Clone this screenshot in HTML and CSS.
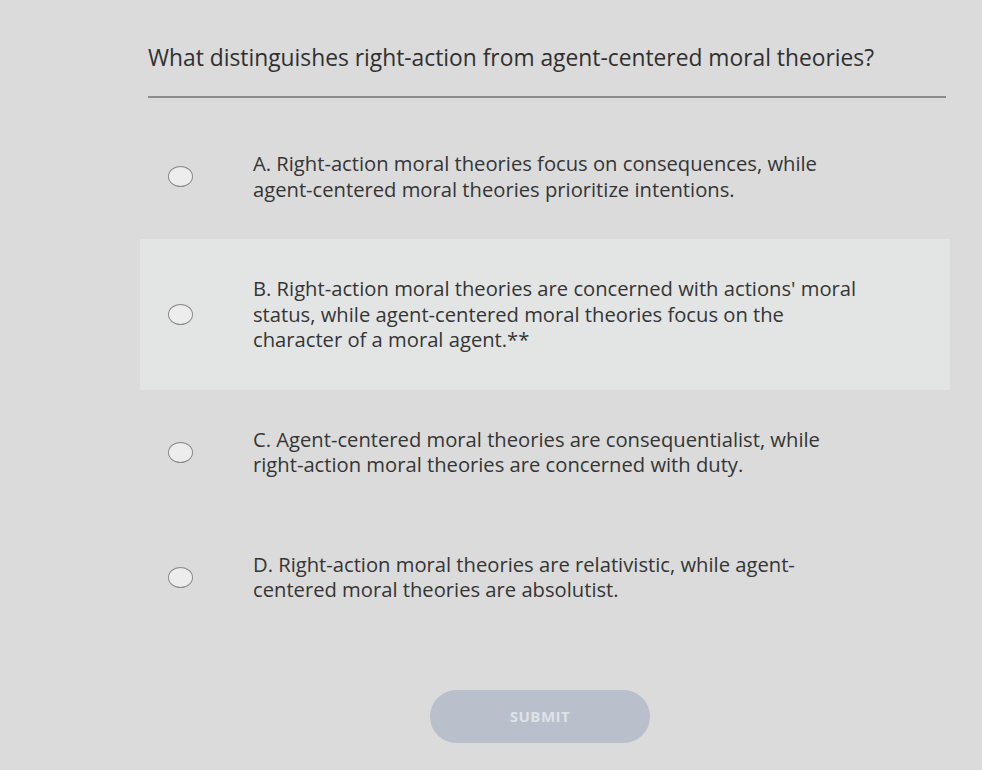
FILE: index.html
```html
<!DOCTYPE html>
<html>
<head>
<meta charset="utf-8">
<link rel="stylesheet" href="styles.css">
</head>
<body>
<div class="page">
  <h1 class="question">What distinguishes right-action from agent-centered moral theories?</h1>
  <div class="rule"></div>
  <div class="options">
    <div class="option">
      <span class="radio"></span>
      <p class="label">A. Right-action moral theories focus on consequences, while<br>agent-centered moral theories prioritize intentions.</p>
    </div>
    <div class="option option-hover">
      <span class="radio"></span>
      <p class="label">B. Right-action moral theories are concerned with actions' moral<br>status, while agent-centered moral theories focus on the<br>character of a moral agent.**</p>
    </div>
    <div class="option">
      <span class="radio"></span>
      <p class="label">C. Agent-centered moral theories are consequentialist, while<br>right-action moral theories are concerned with duty.</p>
    </div>
    <div class="option">
      <span class="radio"></span>
      <p class="label">D. Right-action moral theories are relativistic, while agent-<br>centered moral theories are absolutist.</p>
    </div>
  </div>
  <div class="actions">
    <button class="submit">SUBMIT</button>
  </div>
</div>
</body>
</html>
```
FILE: styles.css
```css
html, body {
  margin: 0;
  padding: 0;
  background: #dadbda;
}
body {
  font-family: "Open Sans", "Liberation Sans", sans-serif;
  color: #333;
  width: 982px;
  height: 770px;
  overflow: hidden;
}
.page {
  padding: 43px 36px 0 148px;
}
.question {
  margin: 0;
  font-size: 22.8px;
  font-weight: 500;
  line-height: 30px;
  color: #303030;
}
.rule {
  margin-top: 23px;
  height: 2px;
  background: #8c8e8e;
}
.options {
  margin-top: 16px;
  margin-left: -8px;
  margin-right: -4px;
}
.option {
  display: flex;
  align-items: center;
  padding: 37px 0;
}
.option-hover {
  background: #e3e5e5;
}
.radio {
  width: 23px;
  height: 19px;
  border: 1.5px solid #8a8a8a;
  border-radius: 50%;
  background: #ecedec;
  margin-left: 28px;
  margin-right: 60px;
  flex: none;
}
.label {
  margin: 0;
  font-size: 20.2px;
  line-height: 25.5px;
  color: #353535;
}
.actions {
  display: flex;
  justify-content: center;
  margin-top: 50px;
  padding-right: 14px;
}
.submit {
  width: 220px;
  height: 53px;
  border: none;
  border-radius: 27px;
  background: #b9c0cb;
  color: #dfe2e6;
  font-family: "Open Sans", "Liberation Sans", sans-serif;
  font-weight: 700;
  font-size: 15px;
  letter-spacing: 0.5px;
}
```
